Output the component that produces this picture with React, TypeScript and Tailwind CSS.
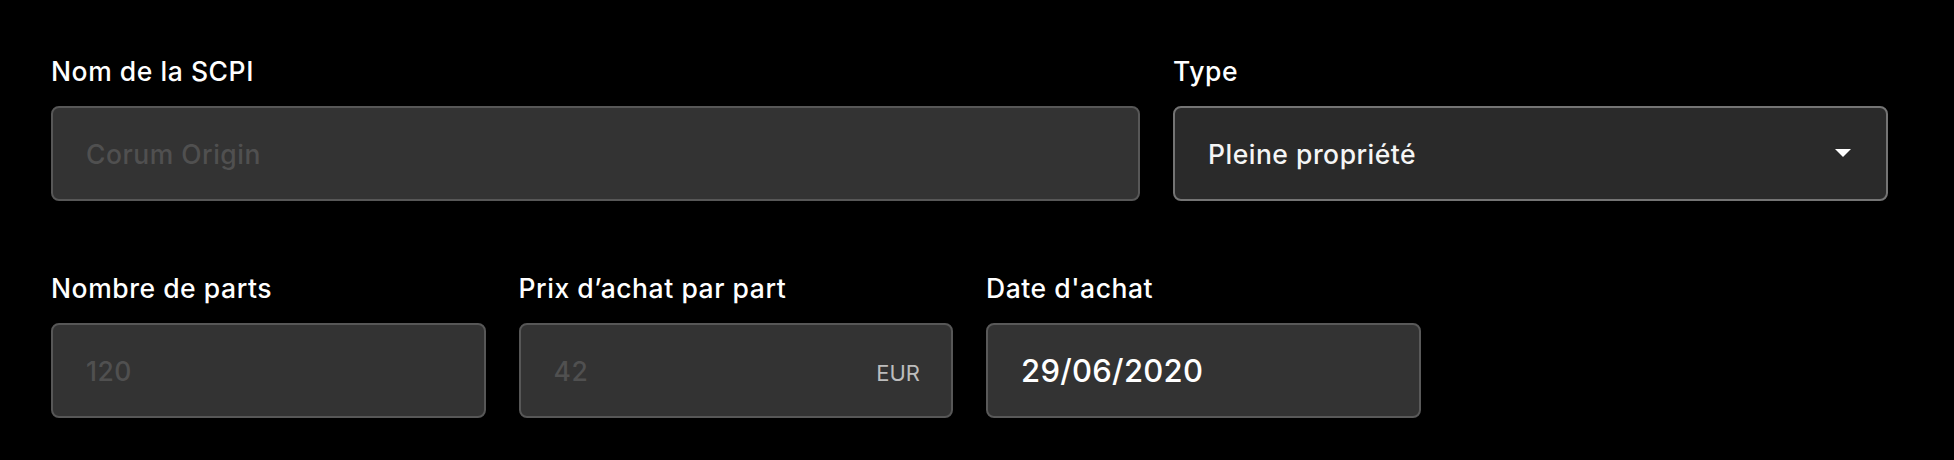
import React from "react";

const font = { fontFamily: "Inter, 'Noto Sans', sans-serif" };

function Label({ children }: { children: React.ReactNode }) {
  return (
    <div className="mb-[19px] h-[32px] text-[26.5px] leading-[32px] font-medium text-white tracking-[0.55px]">
      {children}
    </div>
  );
}

export default function App() {
  return (
    <div
      className="min-h-[460px] w-[1954px] bg-black pl-[51px] pr-[66px] pt-[55px]"
      style={font}
    >
      <div className="grid grid-cols-5 gap-x-[33px]">
        <div className="col-span-3 flex flex-col">
          <Label>Nom de la SCPI</Label>
          <div className="flex h-[95px] items-center rounded-[8px] border-2 border-[#575757] bg-[#333333] pl-[33px] pt-[3px]">
            <span className="text-[26.5px] font-medium tracking-[0.5px] text-[#505050]">Corum Origin</span>
          </div>
        </div>
        <div className="col-span-2 flex flex-col">
          <Label>Type</Label>
          <div className="flex h-[95px] items-center justify-between rounded-[8px] border-2 border-[#747474] bg-[#2a2a2a] pl-[33px] pr-[35px] pt-[3px]">
            <span className="text-[26.5px] font-medium tracking-[0.5px] text-[#f5f5f5]">Pleine propriété</span>
            <svg width="16" height="8" viewBox="0 0 16 8" className="mt-[-4px]">
              <polygon points="0,0 16,0 8,8" fill="#ffffff" />
            </svg>
          </div>
        </div>
      </div>

      <div className="mt-[71px] grid grid-cols-4 gap-x-[33px]">
        <div className="flex flex-col">
          <Label>Nombre de parts</Label>
          <div className="flex h-[95px] items-center rounded-[8px] border-2 border-[#575757] bg-[#333333] pl-[33px] pt-[3px]">
            <span className="text-[26.5px] font-medium tracking-[0.5px] text-[#505050]">120</span>
          </div>
        </div>
        <div className="flex flex-col">
          <Label>Prix d’achat par part</Label>
          <div className="flex h-[95px] items-center justify-between rounded-[8px] border-2 border-[#575757] bg-[#333333] pl-[33px] pr-[31px] pt-[3px]">
            <span className="text-[26.5px] font-medium tracking-[0.5px] text-[#505050]">42</span>
            <span className="mt-[2px] text-[22px] text-[#bdbdbd]">EUR</span>
          </div>
        </div>
        <div className="flex flex-col">
          <Label>Date d'achat</Label>
          <div className="flex h-[95px] items-center rounded-[8px] border-2 border-[#595959] bg-[#333333] pl-[33px] pt-[2px]">
            <span className="text-[31px] font-medium tracking-[0.3px] text-white">29/06/2020</span>
          </div>
        </div>
        <div />
      </div>
    </div>
  );
}
